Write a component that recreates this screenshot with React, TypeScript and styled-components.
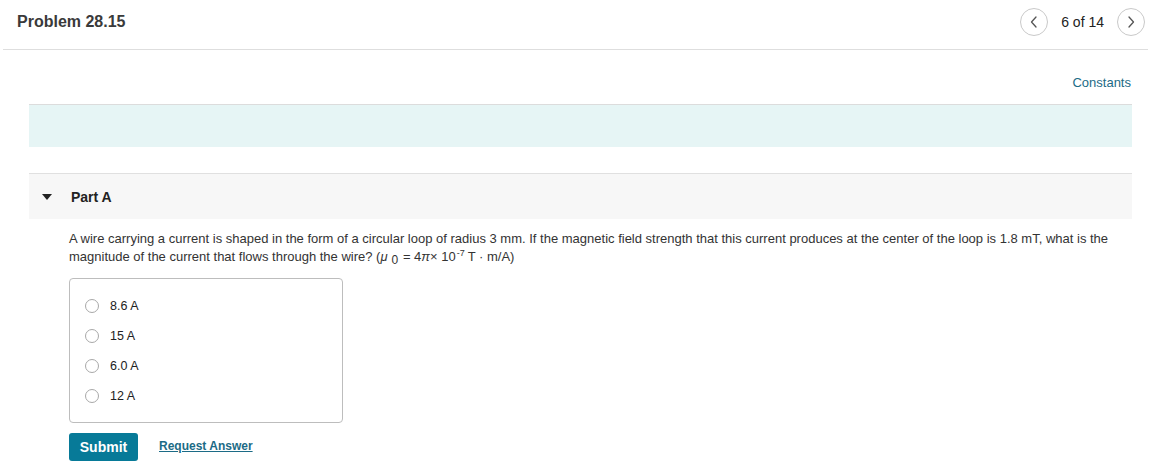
import React from "react";
import styled, { createGlobalStyle } from "styled-components";

const Global = createGlobalStyle`
  html, body { margin: 0; padding: 0; background: #fff; }
  body {
    font-family: "Liberation Sans", Arial, Helvetica, sans-serif;
    color: #333;
  }
  * { box-sizing: border-box; }
`;

const Header = styled.header`
  display: flex;
  align-items: center;
  justify-content: space-between;
  margin: 0 3px;
  padding: 8px 3px 13px 14px;
  border-bottom: 1px solid #dedede;
`;

const Title = styled.h1`
  margin: 0;
  font-size: 16px;
  font-weight: bold;
  color: #3a3a3a;
`;

const Pager = styled.div`
  display: flex;
  align-items: center;
  gap: 13px;
  font-size: 14px;
  color: #222;
`;

const NavButton = styled.button`
  width: 28px;
  height: 28px;
  border-radius: 50%;
  border: 1px solid #c9c9c9;
  background: #fff;
  padding: 0;
  display: flex;
  align-items: center;
  justify-content: center;
  color: #555;
`;

const Main = styled.main`
  padding: 0 19px 0 29px;
`;

const ConstantsRow = styled.div`
  display: flex;
  justify-content: flex-end;
  padding: 25px 1px 14px 0;
`;

const LinkText = styled.a`
  font-size: 13px;
  color: #1c6b86;
  text-decoration: none;
`;

const InfoBox = styled.div`
  height: 43px;
  background: #e6f5f5;
  border-top: 1px solid #dcdcdc;
`;

const PartHeader = styled.div`
  margin-top: 26px;
  height: 46px;
  display: flex;
  align-items: center;
  gap: 19px;
  padding-left: 13px;
  background: #f7f7f7;
  border-top: 1px solid #e0e0e0;
  font-size: 14px;
  font-weight: bold;
  color: #222;
`;

const Caret = styled.span`
  width: 0;
  height: 0;
  border-left: 5px solid transparent;
  border-right: 5px solid transparent;
  border-top: 6px solid #222;
  margin-top: 1px;
`;

const Body = styled.section`
  padding: 11px 20px 0 40px;
`;

const Question = styled.p`
  margin: 0;
  font-size: 13px;
  line-height: 18px;
  color: #333;
`;

const Sub = styled.span`
  display: inline-block;
  font-size: 12px;
  line-height: 12px;
  transform: translateY(3px);
  margin: 0 1px 0 4px;
`;

const Sup = styled.span`
  display: inline-block;
  font-size: 9px;
  line-height: 9px;
  transform: translateY(-5px);
  margin: 0 3px 0 1px;
`;

const Options = styled.div`
  margin-top: 12px;
  width: 274px;
  border: 1px solid #bdbdbd;
  border-radius: 4px;
  padding: 12px 15px 11px;
`;

const Option = styled.label`
  display: flex;
  align-items: center;
  gap: 11px;
  height: 30px;
  font-size: 12.5px;
  color: #222;
`;

const Radio = styled.span`
  width: 14px;
  height: 14px;
  border-radius: 50%;
  border: 1px solid #a8a8a8;
  background: #fff;
`;

const Actions = styled.div`
  display: flex;
  align-items: center;
  gap: 21px;
  margin-top: 10px;
`;

const Submit = styled.button`
  width: 69px;
  height: 28px;
  border: none;
  border-radius: 3px;
  background: #077a98;
  color: #fff;
  font-family: inherit;
  font-size: 14px;
  font-weight: bold;
  padding: 0;
`;

const RequestLink = styled(LinkText)`
  font-size: 12px;
  font-weight: bold;
  text-decoration: underline;
  margin-top: -2px;
`;

const Chevron = ({ dir }: { dir: "left" | "right" }) => (
  <svg width="10" height="12" viewBox="0 0 10 12" fill="none">
    <path
      d={dir === "left" ? "M7 1 L2.5 6 L7 11" : "M3 1 L7.5 6 L3 11"}
      stroke="#555"
      strokeWidth="1.3"
      strokeLinecap="round"
      strokeLinejoin="round"
    />
  </svg>
);

const answers = ["8.6 A", "15 A", "6.0 A", "12 A"];

export default function App() {
  return (
    <>
      <Global />
      <Header>
        <Title>Problem 28.15</Title>
        <Pager>
          <NavButton aria-label="previous">
            <Chevron dir="left" />
          </NavButton>
          <span>6 of 14</span>
          <NavButton aria-label="next">
            <Chevron dir="right" />
          </NavButton>
        </Pager>
      </Header>
      <Main>
        <ConstantsRow>
          <LinkText href="#">Constants</LinkText>
        </ConstantsRow>
        <InfoBox />
        <PartHeader>
          <Caret />
          Part A
        </PartHeader>
        <Body>
          <Question>
            A wire carrying a current is shaped in the form of a circular loop of radius 3 mm. If the
            magnetic field strength that this current produces at the center of the loop is 1.8 mT,
            what is the magnitude of the current that flows through the wire? (<i>μ</i>
            <Sub>0</Sub> = 4<i>π</i>× 10<Sup>-7</Sup>T · m/A)
          </Question>
          <Options>
            {answers.map((a) => (
              <Option key={a}>
                <Radio />
                {a}
              </Option>
            ))}
          </Options>
          <Actions>
            <Submit>Submit</Submit>
            <RequestLink href="#">Request Answer</RequestLink>
          </Actions>
        </Body>
      </Main>
    </>
  );
}
